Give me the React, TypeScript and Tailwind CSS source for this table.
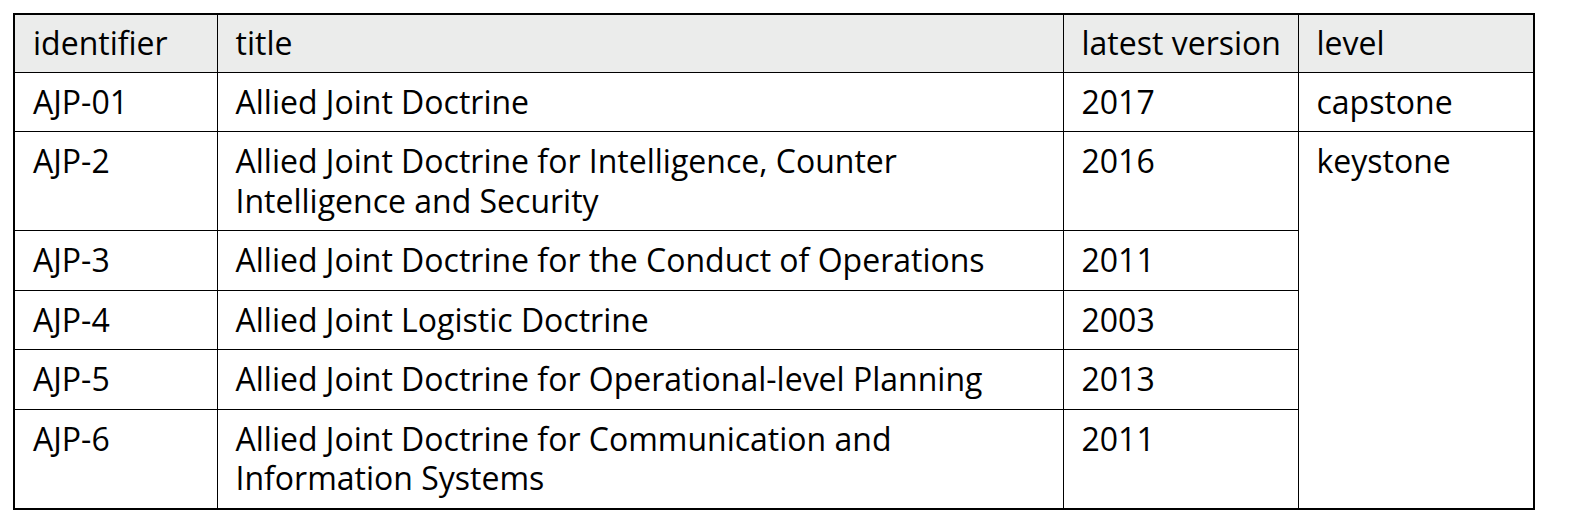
const rows = [
  { id: "AJP-01", title: "Allied Joint Doctrine", year: "2017" },
  { id: "AJP-2", title: "Allied Joint Doctrine for Intelligence, Counter Intelligence and Security", year: "2016" },
  { id: "AJP-3", title: "Allied Joint Doctrine for the Conduct of Operations", year: "2011" },
  { id: "AJP-4", title: "Allied Joint Logistic Doctrine", year: "2003" },
  { id: "AJP-5", title: "Allied Joint Doctrine for Operational-level Planning", year: "2013" },
  { id: "AJP-6", title: "Allied Joint Doctrine for Communication and Information Systems", year: "2011" },
];

const base = "border border-black align-top px-[18px] text-left font-normal";
const cell = `${base} pt-[9px] pb-[10px]`;
const head = `${base} pt-[8px] pb-[9px]`;

export default function App() {
  return (
    <div className="bg-white w-[1588px] h-[521px] pt-[13px] pl-[13px]" style={{ fontFamily: '"Open Sans", sans-serif' }}>
      <table className="border-collapse table-fixed w-[1520px] text-[32px] leading-[39.5px] text-black border-2 border-black">
        <thead>
          <tr className="bg-[#ebeceb] whitespace-nowrap">
            <th className={`${head} w-[203px]`}>identifier</th>
            <th className={`${head} w-[846px]`}>title</th>
            <th className={`${head} w-[235px]`}>latest version</th>
            <th className={`${head} w-[236px]`}>level</th>
          </tr>
        </thead>
        <tbody>
          {rows.map((r, i) => (
            <tr key={r.id}>
              <td className={cell}>{r.id}</td>
              <td className={cell}>{r.title}</td>
              <td className={cell}>{r.year}</td>
              {i === 0 && <td className={cell}>capstone</td>}
              {i === 1 && <td className={cell} rowSpan={5}>keystone</td>}
            </tr>
          ))}
        </tbody>
      </table>
    </div>
  );
}
